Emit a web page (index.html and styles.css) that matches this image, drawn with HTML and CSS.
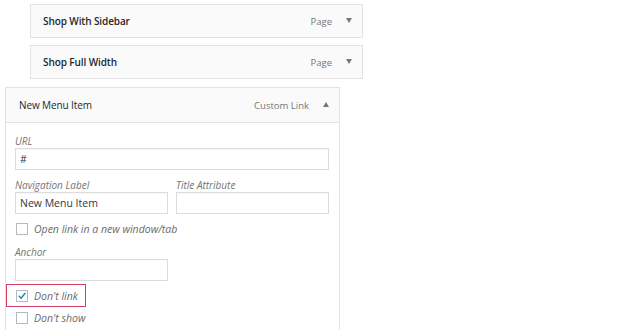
FILE: index.html
```html
<!DOCTYPE html>
<html>
<head>
<meta charset="utf-8">
<link rel="stylesheet" href="styles.css">
</head>
<body>
<div class="page">
  <div class="item item-sub">
    <span class="item-title">Shop With Sidebar</span>
    <span class="item-meta"><span class="item-type">Page</span><span class="arrow down"></span></span>
  </div>
  <div class="item item-sub">
    <span class="item-title">Shop Full Width</span>
    <span class="item-meta"><span class="item-type">Page</span><span class="arrow down"></span></span>
  </div>
  <div class="panel">
    <div class="item item-open">
      <span class="item-title plain">New Menu Item</span>
      <span class="item-meta"><span class="item-type">Custom Link</span><span class="arrow up"></span></span>
    </div>
    <div class="settings">
      <label class="field">
        <span class="label">URL</span>
        <input class="input wide" type="text" value="#">
      </label>
      <div class="row">
        <label class="field">
          <span class="label">Navigation Label</span>
          <input class="input half" type="text" value="New Menu Item">
        </label>
        <label class="field">
          <span class="label">Title Attribute</span>
          <input class="input half" type="text" value="">
        </label>
      </div>
      <div class="check"><span class="box"></span><span class="check-label">Open link in a new window/tab</span></div>
      <label class="field anchor">
        <span class="label">Anchor</span>
        <input class="input half" type="text" value="">
      </label>
      <div class="highlighted">
        <div class="check flat"><span class="box checked"><svg viewBox="0 0 12 12" width="12" height="12"><path d="M2.6 6.2 L5 8.6 L9.6 2.8" fill="none" stroke="#1e8cbe" stroke-width="1.8" stroke-linecap="round" stroke-linejoin="round"/></svg></span><span class="check-label">Don't link</span></div>
      </div>
      <div class="check last"><span class="box"></span><span class="check-label">Don't show</span></div>
    </div>
  </div>
</div>
</body>
</html>
```
FILE: styles.css
```css
* { box-sizing: border-box; }
html, body { margin: 0; padding: 0; background: #fff; }
body { font-family: "Open Sans", "Noto Sans", sans-serif; color: #23282d; width: 620px; height: 330px; overflow: hidden; }
.page { padding-top: 4px; display: flex; flex-direction: column; align-items: flex-start; }
.item {
  display: flex; align-items: center; justify-content: space-between;
  background: #fafafa; border: 1px solid #e3e3e3;
}
.item-sub { margin-left: 30px; width: 333px; height: 34px; padding: 0 10px 0 12px; margin-bottom: 7px; }
.item-sub + .item-sub { margin-bottom: 8px; }
.item-title { font-size: 10px; font-weight: 600; color: #23282d; letter-spacing: -0.1px; }
.item-title.plain { font-weight: 400; }
.item-meta { display: flex; align-items: center; }
.item-type { font-size: 9.5px; color: #72777c; }
.arrow { width: 0; height: 0; margin-left: 14px; border-left: 3.5px solid transparent; border-right: 3.5px solid transparent; }
.arrow.down { border-top: 5px solid #72777c; margin-top: -2px; }
.arrow.up { border-bottom: 5px solid #72777c; margin-top: -2px; }
.panel { margin-left: 5px; width: 335px; border: 1px solid #e3e3e3; border-top: none; }
.item-open { height: 36px; border-left: none; border-right: none; border-top: 1px solid #e3e3e3; padding: 0 10px 0 13px; }
.item-open .item-title { font-size: 10px; }
.settings { background: #fff; padding: 11px 10px 6px 9px; display: flex; flex-direction: column; }
.field { display: flex; flex-direction: column; }
.label { font-size: 10px; font-style: italic; color: #757575; line-height: 14px; }
.input {
  height: 22px; border: 1px solid #dcdcdc; background: #fff; font-family: inherit;
  font-size: 10.5px; color: #32373c; padding: 0 4px; margin: 0; outline: none; box-shadow: inset 0 1px 1px rgba(0,0,0,0.03);
}
.input.wide { width: 314px; }
.input.half { width: 153px; }
.row { display: flex; gap: 8px; margin-top: 8px; }
.check { display: flex; align-items: center; gap: 6px; height: 12px; margin-top: 9px; }
.check.flat { margin-top: 0; }
.box { width: 12px; height: 12px; border: 1px solid #b4b9be; background: #fff; display: flex; align-items: center; justify-content: center; margin-left: 1px; flex: none; }
.check-label { font-size: 10.5px; font-style: italic; color: #6b6b6b; white-space: nowrap; }
.anchor { margin-top: 10px; }
.highlighted {
  margin-top: 3px; margin-left: -9px; width: 80px; height: 23px;
  border: 1.5px solid #d63d62; padding-left: 8px; display: flex; align-items: center;
}
.last { margin-top: 5px; }
```
